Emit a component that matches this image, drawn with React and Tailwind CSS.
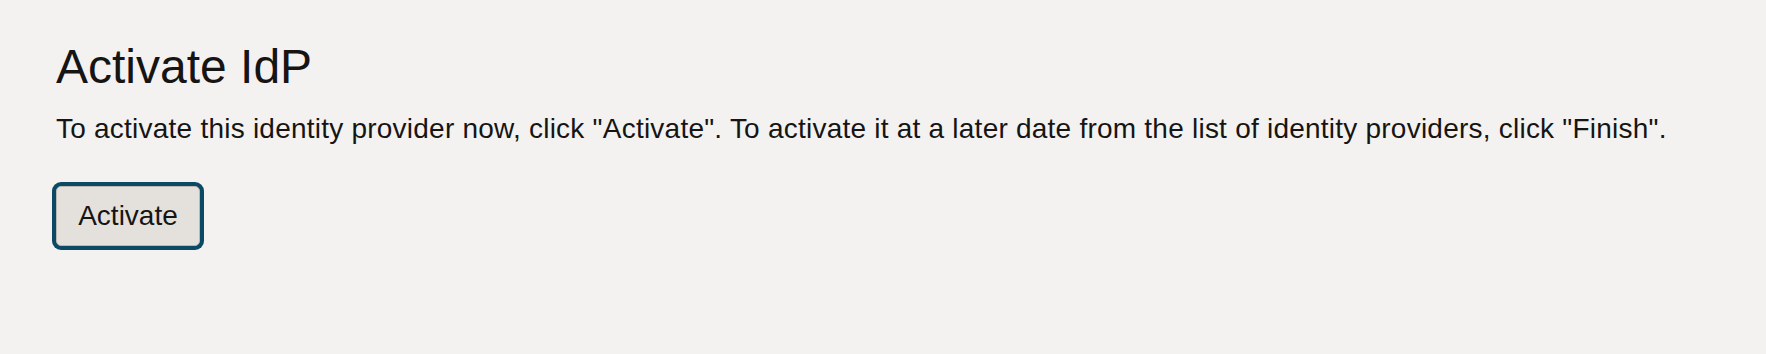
export default function App() {
  return (
    <div
      className="min-h-[354px] w-full bg-[#f3f2f1] text-[#161513] pl-[56px] pt-[38px]"
      style={{ fontFamily: '"Liberation Sans", Arial, sans-serif' }}
    >
      <h1 className="text-[48px] leading-[58px] font-normal">Activate IdP</h1>
      <p className="mt-[15px] text-[28px] leading-[36px] tracking-[0.23px]">
        To activate this identity provider now, click "Activate". To activate it at a later date from the list of identity providers, click "Finish".
      </p>
      <button
        type="button"
        className="mt-[39px] w-[144px] h-[60px] rounded-[5px] border border-[#bdb8b2] bg-[#e4e1dd] text-[28px] leading-[36px] text-[#161513] shadow-[0_0_0_4px_#0b4a65]"
      >
        Activate
      </button>
    </div>
  );
}
